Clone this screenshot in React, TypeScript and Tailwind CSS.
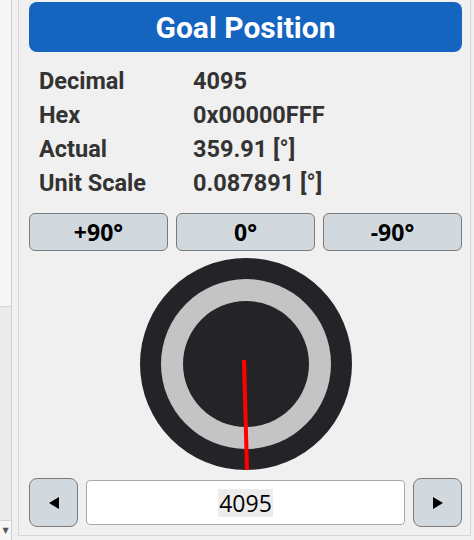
import React from 'react';

const ROWS = [
    { label: 'Decimal', value: '4095' },
    { label: 'Hex', value: '0x00000FFF' },
    { label: 'Actual', value: '359.91 [°]' },
    { label: 'Unit Scale', value: '0.087891 [°]' },
];

const PRESETS = ['+90°', '0°', '-90°'];

function Dial() {
    // 212px dial, needle pointing almost straight down (359.91°)
    return (
        <svg width="212" height="212" viewBox="0 0 212 212">
            <circle cx="106" cy="106" r="106" fill="#242428" />
            <circle cx="106" cy="106" r="85" fill="#c4c4c4" />
            <circle cx="106" cy="106" r="63" fill="#242428" />
            <line x1="104" y1="102" x2="107" y2="212" stroke="#ff0000" strokeWidth="4" />
        </svg>
    );
}

function StepButton({ dir }: { dir: 'left' | 'right' }) {
    return (
        <button
            type="button"
            className="w-[49px] h-[49px] shrink-0 flex items-center justify-center rounded-[8px] border-[1.5px] border-[#7a7a7a] bg-[#d1d9df]"
        >
            <svg width="12" height="14" viewBox="0 0 12 14">
                {dir === 'left'
                    ? <polygon points="11,1 11,13 1,7" fill="#000" />
                    : <polygon points="1,1 1,13 11,7" fill="#000" />}
            </svg>
        </button>
    );
}

export default function App() {
    return (
        <div className="flex w-[474px] h-[540px] bg-[#f0f0f0] overflow-hidden">
            {/* left neighbour strip */}
            <div className="w-[12px] shrink-0 flex flex-col border-r border-[#cfcfcf]">
                <div className="h-[307px] bg-[#f7f7f7] border-b border-[#d4d4d4]" />
                <div className="flex-1 bg-[#ebebeb] flex flex-col justify-end">
                    <div className="h-[20px] border-t border-[#d4d4d4] bg-[#f7f7f7] flex items-center justify-center">
                        <span className="text-[8px] leading-none text-[#555]" style={{ fontFamily: '"DejaVu Sans", sans-serif' }}>▼</span>
                    </div>
                </div>
            </div>
            <div className="w-[6px] shrink-0" />

            {/* panel */}
            <div
                className="w-[453px] h-[536px] shrink-0 border-l border-r border-b border-[#d6d6d6] bg-[#f0f0f0] pl-[10px] pr-[8px] flex flex-col"
                style={{ fontFamily: 'Roboto, "Liberation Sans", sans-serif' }}
            >
                <div className="mt-[2px] h-[50px] shrink-0 rounded-[8px] bg-[#1565c0] flex items-center justify-center">
                    <span className="text-[30px] font-bold text-white">Goal Position</span>
                </div>

                <div className="mt-[13px] pl-[10px] flex flex-col">
                    {ROWS.map((r) => (
                        <div key={r.label} className="flex h-[34px] items-center text-[23.5px] font-bold text-[#333333]">
                            <span className="w-[154px]">{r.label}</span>
                            <span>{r.value}</span>
                        </div>
                    ))}
                </div>

                <div className="mt-[12px] grid grid-cols-3 gap-[8px]">
                    {PRESETS.map((p) => (
                        <button
                            key={p}
                            type="button"
                            className="h-[38px] rounded-[6px] border-[1.5px] border-[#7a7a7a] bg-[#d1d9df] text-[23px] font-bold text-black"
                            style={{ fontFamily: '"Open Sans", "Noto Sans", sans-serif' }}
                        >
                            {p}
                        </button>
                    ))}
                </div>

                <div className="mt-[7px] flex justify-center">
                    <Dial />
                </div>

                <div className="mt-[8px] flex items-center gap-[8px]">
                    <StepButton dir="left" />
                    <div className="flex-1 h-[45px] rounded-[4px] border border-[#a8a8a8] bg-white flex items-center justify-center">
                        <span
                            className="px-[1px] bg-[#ececec] text-[23px] leading-[28px] text-black"
                            style={{ fontFamily: '"Open Sans", "Noto Sans", sans-serif' }}
                        >
                            4095
                        </span>
                    </div>
                    <StepButton dir="right" />
                </div>
            </div>
        </div>
    );
}
